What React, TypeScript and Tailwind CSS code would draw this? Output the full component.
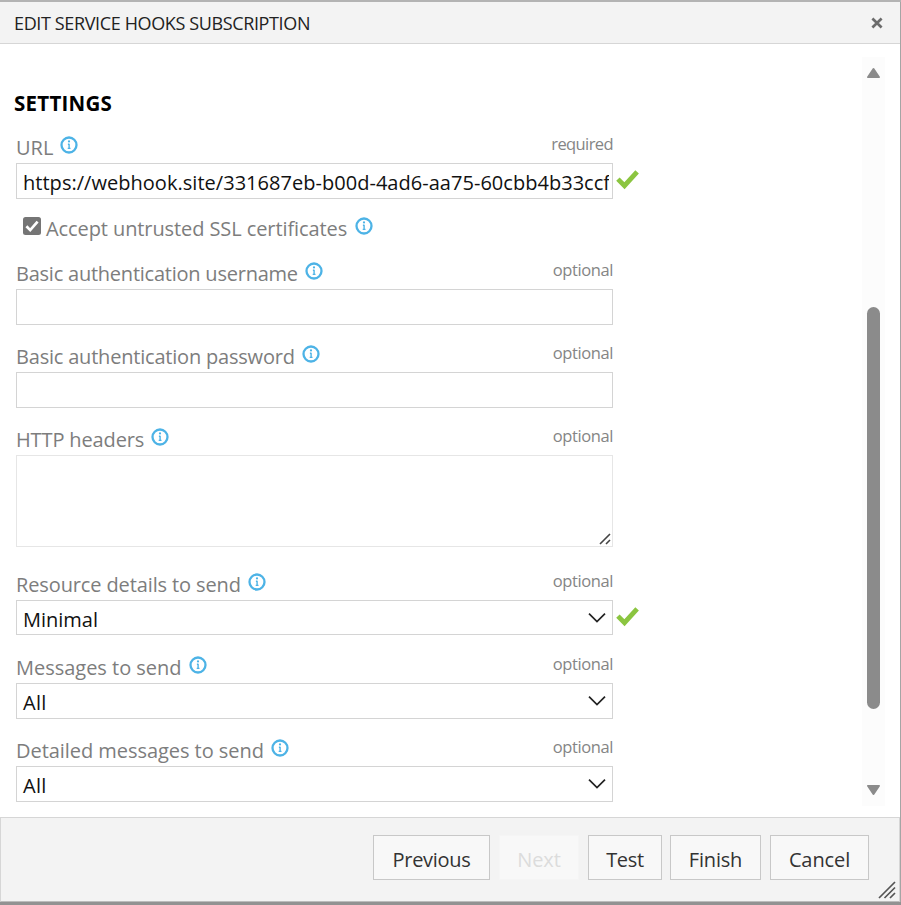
import type { ReactNode } from "react";

function InfoIcon({ className }: { className: string }) {
  return (
    <svg className={`block shrink-0 ${className}`} width="18" height="18" viewBox="0 0 18 18" fill="none">
      <circle cx="9" cy="9" r="7.5" stroke="#4db3e6" strokeWidth="2.3" />
      <path d="M9.1 7.7V12.4M7.9 8.2H9.1M7.7 12.4H10.5" stroke="#4db3e6" strokeWidth="1.4" />
      <circle cx="9" cy="5.4" r="1.1" fill="#4db3e6" />
    </svg>
  );
}

function ValidMark() {
  return (
    <svg className="ml-[3px] mt-[5px] block shrink-0" width="24" height="22" viewBox="0 0 24 22" fill="none">
      <path d="M1.9 11.1L8.5 17.7L21.1 3.9" stroke="#8bc540" strokeWidth="4.8" />
    </svg>
  );
}

function Chevron() {
  return (
    <svg className="mr-[5px] block" width="20" height="12" viewBox="0 0 20 12" fill="none">
      <path d="M2 1.6L10 9.6L18 1.6" stroke="#222" strokeWidth="1.7" />
    </svg>
  );
}

interface FieldProps {
  label: string;
  tracking: string;
  hint?: string;
  hintTracking?: string;
  valid?: boolean;
  children: ReactNode;
}

function Field({ label, tracking, hint = "optional", hintTracking = "tracking-[-0.4px]", valid, children }: FieldProps) {
  return (
    <div>
      <div className="flex h-[47px] w-[597px] items-start justify-between">
        <div className="flex">
          <span className={`mt-[18px] whitespace-nowrap text-[20px] leading-[28px] text-[#7d7d7d] ${tracking}`}>{label}</span>
          <InfoIcon className="ml-[7px] mt-[20px]" />
        </div>
        <span className={`mt-[16px] text-[16.5px] leading-[24px] text-[#858585] ${hintTracking}`}>{hint}</span>
      </div>
      <div className="flex">
        {children}
        {valid && <ValidMark />}
      </div>
    </div>
  );
}

function Select({ value, tracking, height = "h-[36px]" }: { value: string; tracking: string; height?: string }) {
  return (
    <div className={`flex w-[597px] items-center justify-between border border-[#d4d4d4] pl-[6px] ${height}`}>
      <span className={`mt-[3px] text-[20px] leading-[28px] text-[#111] ${tracking}`}>{value}</span>
      <Chevron />
    </div>
  );
}

const button = "flex h-[45px] items-center justify-center border pt-[4px] text-[20px] leading-none";

export default function App() {
  return (
    <div className="flex h-[905px] w-[901px] flex-col overflow-hidden border-t-2 border-t-[#b3b3b3] bg-white font-['Open_Sans','Noto_Sans',sans-serif]">
      <div className="flex min-h-0 flex-1 flex-col border-r border-r-[#a5a5a5]">
        <header className="flex h-[42px] shrink-0 items-center justify-between border-b border-[#d6d6d6] bg-[#f3f3f3] pl-[14px] pr-[17px]">
          <h1 className="whitespace-nowrap text-[18px] leading-[26px] tracking-[-0.37px] text-[#222]">EDIT SERVICE HOOKS SUBSCRIPTION</h1>
          <svg width="12" height="12" viewBox="0 0 12 12" fill="none">
            <path d="M1.4 1.6L10.6 10.4M10.6 1.6L1.4 10.4" stroke="#6b6b6b" strokeWidth="2.7" />
          </svg>
        </header>

        <main className="flex h-[773px] shrink-0 justify-between">
          <section className="pl-4">
            <h2 className="-ml-[2px] mt-[45px] h-[27px] whitespace-nowrap text-[20.5px] font-bold leading-[28px] tracking-[0.25px] text-black">SETTINGS</h2>
            <Field label="URL" tracking="tracking-[0px]" hint="required" hintTracking="tracking-[-0.6px]" valid>
              <div className="h-[36px] w-[597px] border border-[#d4d4d4] pl-[6px] pr-[3px]">
                <div className="overflow-hidden whitespace-nowrap pt-[5px] text-[20px] leading-[28px] tracking-[0.03px] text-[#111]">
                  https://webhook.site/331687eb-b00d-4ad6-aa75-60cbb4b33ccf
                </div>
              </div>
            </Field>
            <div className="flex h-[43px] pl-[7px]">
              <svg className="mt-[18px] block shrink-0" width="18" height="18" viewBox="0 0 18 18" fill="none">
                <rect width="18" height="18" rx="2.5" fill="#757575" />
                <path d="M3.4 9.3L7.2 13.1L14.6 4.6" stroke="white" strokeWidth="2.7" />
              </svg>
              <span className="ml-[5px] mt-[16px] whitespace-nowrap text-[20px] leading-[28px] tracking-[-0.09px] text-[#7d7d7d]">Accept untrusted SSL certificates</span>
              <InfoIcon className="ml-[8px] mt-[18px]" />
            </div>
            <Field label="Basic authentication username" tracking="tracking-[-0.23px]">
              <div className="h-[36px] w-[597px] border border-[#d4d4d4]" />
            </Field>
            <Field label="Basic authentication password" tracking="tracking-[-0.2px]">
              <div className="h-[36px] w-[597px] border border-[#d4d4d4]" />
            </Field>
            <Field label="HTTP headers" tracking="tracking-[-0.13px]">
              <div className="mb-[6px] flex h-[92px] w-[597px] items-end justify-end border border-[#e6e6e6]">
                <svg className="mb-px mr-px block" width="12" height="12" viewBox="0 0 12 12" fill="none">
                  <path d="M1 11L11 1M7 11L11 7" stroke="#444" strokeWidth="1.6" />
                </svg>
              </div>
            </Field>
            <Field label="Resource details to send" tracking="tracking-[-0.12px]" valid>
              <Select value="Minimal" tracking="pt-px tracking-[0px]" height="mb-px h-[35px]" />
            </Field>
            <Field label="Messages to send" tracking="tracking-[-0.02px]">
              <Select value="All" tracking="tracking-[0.3px]" />
            </Field>
            <Field label="Detailed messages to send" tracking="tracking-[-0.05px]">
              <Select value="All" tracking="tracking-[0.3px]" />
            </Field>
          </section>

          <div className="mb-[11px] mr-[15px] mt-[13px] flex w-[23px] flex-col items-center bg-[#fcfcfc]">
            <svg className="mt-[10px] block shrink-0" width="15" height="12" viewBox="0 0 15 12">
              <path d="M7.5 1.8L13.2 10.2H1.8Z" fill="#8b8b8b" stroke="#8b8b8b" strokeWidth="1.6" strokeLinejoin="round" />
            </svg>
            <div className="mt-[228px] h-[402px] w-[13px] shrink-0 rounded-full bg-[#8b8b8b]" />
            <svg className="mt-[75px] block shrink-0" width="15" height="12" viewBox="0 0 15 12">
              <path d="M7.5 10.2L13.2 1.8H1.8Z" fill="#8b8b8b" stroke="#8b8b8b" strokeWidth="1.6" strokeLinejoin="round" />
            </svg>
          </div>
        </main>

        <footer className="relative flex min-h-0 flex-1 justify-end border border-b-[#bcbcbc] border-l-[#d6d6d6] border-r-[#d6d6d6] border-t-[#d6d6d6] bg-[#f3f3f3] pr-[30px] pt-[17px] text-[#333]">
          <button className={`${button} w-[117px] border-[#c8c8c8] bg-[#f8f8f8] tracking-[-0.3px]`}>Previous</button>
          <button className={`${button} ml-[9px] w-[80px] border-[#f5f5f5] bg-[#f8f8f8] tracking-[-0.1px] text-[#dcdcdc]`} disabled>Next</button>
          <button className={`${button} ml-[9px] w-[74px] border-[#c8c8c8] bg-[#f8f8f8] tracking-[-0.3px]`}>Test</button>
          <button className={`${button} ml-[8px] w-[91px] border-[#c8c8c8] bg-[#f8f8f8] tracking-[-0.2px]`}>Finish</button>
          <button className={`${button} ml-[9px] w-[99px] border-[#c8c8c8] bg-[#f8f8f8] tracking-[-0.1px]`}>Cancel</button>
          <svg className="absolute bottom-[2px] right-[3px]" width="18" height="18" viewBox="0 0 18 18" fill="none">
            <path d="M1 17L17 1M6.5 17L17 6.5M12 17L17 12" stroke="#555" strokeWidth="1.7" />
          </svg>
        </footer>
      </div>
      <div className="h-[3px] shrink-0 bg-[#929292]" />
    </div>
  );
}
